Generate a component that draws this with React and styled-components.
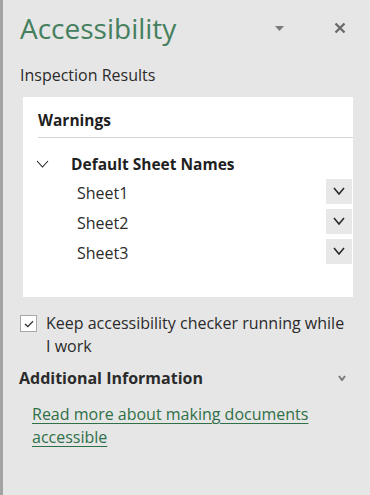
import React from 'react';
import styled, { createGlobalStyle } from 'styled-components';

const sheets = ['Sheet1', 'Sheet2', 'Sheet3'];

const GlobalStyle = createGlobalStyle`
  html, body {
    margin: 0;
    padding: 0;
    background: #e6e6e6;
  }
  body {
    font-family: "Open Sans", "Noto Sans", sans-serif;
    color: #262626;
  }
`;

const Pane = styled.aside`
  box-sizing: border-box;
  min-height: 495px;
  width: 370px;
  border-left: 3px solid #a3a3a3;
  padding: 8px 23px 0 17px;
  display: flex;
  flex-direction: column;
`;

const Header = styled.header`
  display: flex;
  align-items: center;
  height: 40px;
`;

const Title = styled.h1`
  flex: 1;
  margin: 0;
  font-size: 28px;
  font-weight: 400;
  line-height: 40px;
  color: #45805e;
`;

const IconButton = styled.button`
  border: 0;
  background: none;
  padding: 0;
  display: flex;
  align-items: center;
  justify-content: center;
  width: ${p => p.$w}px;
  height: 20px;
  margin-left: ${p => p.$gap || 0}px;
  color: ${p => p.$color};
`;

const Subheading = styled.h2`
  margin: 16px 0 0;
  font-size: 16px;
  font-weight: 400;
  line-height: 22px;
  color: #2b2b2b;
`;

const Card = styled.section`
  margin: 11px -6px 0 3px;
  background: #fff;
  padding: 12px 0 29px;
`;

const CardTitle = styled.div`
  margin-left: 15px;
  padding-bottom: 6px;
  border-bottom: 1px solid #d4d4d4;
  font-size: 15.5px;
  font-weight: 700;
  line-height: 22px;
  color: #1f1f1f;
`;

const GroupHeader = styled.div`
  display: flex;
  align-items: center;
  margin-top: 15px;
  padding-left: 13px;
  height: 22px;
  font-size: 15.5px;
  font-weight: 700;
  color: #1f1f1f;
  gap: 22px;
`;

const SheetList = styled.ul`
  list-style: none;
  margin: 3px 0 0;
  padding: 0;
`;

const SheetRow = styled.li`
  display: flex;
  align-items: center;
  justify-content: space-between;
  height: 30px;
  padding: 0 1px 0 54px;
  font-size: 16px;
  color: #2b2b2b;
`;

const RowMenu = styled.button`
  width: 26px;
  height: 25px;
  margin-top: -4px;
  border: 0;
  padding: 0;
  background: #e8e8e8;
  color: #2a2a2a;
  display: flex;
  align-items: center;
  justify-content: center;
`;

const CheckRow = styled.label`
  display: flex;
  align-items: flex-start;
  margin-top: 15px;
  gap: 9px;
`;

const Box = styled.span`
  flex: none;
  box-sizing: border-box;
  width: 17px;
  height: 17px;
  margin-top: 3px;
  background: #fff;
  border: 1px solid #a8a8a8;
  display: flex;
  align-items: center;
  justify-content: center;
  color: #333;
`;

const CheckText = styled.span`
  max-width: 312px;
  font-size: 16px;
  line-height: 23px;
  color: #2b2b2b;
`;

const Section = styled.div`
  display: flex;
  align-items: center;
  justify-content: space-between;
  margin: 8px 0 0 -1px;
  height: 24px;
  padding-right: 1px;
  font-size: 16px;
  font-weight: 700;
  color: #2b2b2b;
`;

const SectionToggle = styled.span`
  display: flex;
  color: #7a7a7a;
`;

const Link = styled.a`
  display: block;
  margin: 13px 0 0 12px;
  max-width: 290px;
  font-size: 16px;
  line-height: 23px;
  color: #2f7048;
  text-decoration: underline;
  text-underline-offset: 3px;
`;

const Chevron = ({ w = 12, h = 6, sw = 1.5 }) => (
  <svg width={w} height={h + 2} viewBox={`0 0 ${w} ${h + 2}`} fill="none">
    <path d={`M1 1 L${w / 2} ${h + 1} L${w - 1} 1`} stroke="currentColor" strokeWidth={sw} />
  </svg>
);

const App = () => (
  <>
    <GlobalStyle />
    <Pane>
      <Header>
        <Title>Accessibility</Title>
        <IconButton $w={10} $color="#7a7a7a" aria-label="Task pane options">
          <svg width="9" height="5" viewBox="0 0 9 5">
            <path d="M0 0 H9 L4.5 5 Z" fill="currentColor" />
          </svg>
        </IconButton>
        <IconButton $w={14} $gap={49} $color="#6b6b6b" aria-label="Close">
          <svg width="12" height="12" viewBox="0 0 12 12">
            <path d="M1.5 1.5 L10.5 10.5 M10.5 1.5 L1.5 10.5" stroke="currentColor" strokeWidth="2.4" />
          </svg>
        </IconButton>
      </Header>

      <Subheading>Inspection Results</Subheading>

      <Card>
        <CardTitle>Warnings</CardTitle>
        <GroupHeader>
          <Chevron w={13} h={6} sw={1.1} />
          Default Sheet Names
        </GroupHeader>
        <SheetList>
          {sheets.map(s => (
            <SheetRow key={s}>
              {s}
              <RowMenu aria-label={`${s} options`}>
                <Chevron w={12} h={6} sw={1.6} />
              </RowMenu>
            </SheetRow>
          ))}
        </SheetList>
      </Card>

      <CheckRow>
        <Box>
          <svg width="10" height="8" viewBox="0 0 10 8" fill="none">
            <path d="M1 4 L3.8 6.6 L9 1.2" stroke="currentColor" strokeWidth="1.3" />
          </svg>
        </Box>
        <CheckText>Keep accessibility checker running while I work</CheckText>
      </CheckRow>

      <Section>
        Additional Information
        <SectionToggle>
          <Chevron w={8} h={4} sw={2} />
        </SectionToggle>
      </Section>

      <Link href="#">Read more about making documents accessible</Link>
    </Pane>
  </>
);

export default App;
